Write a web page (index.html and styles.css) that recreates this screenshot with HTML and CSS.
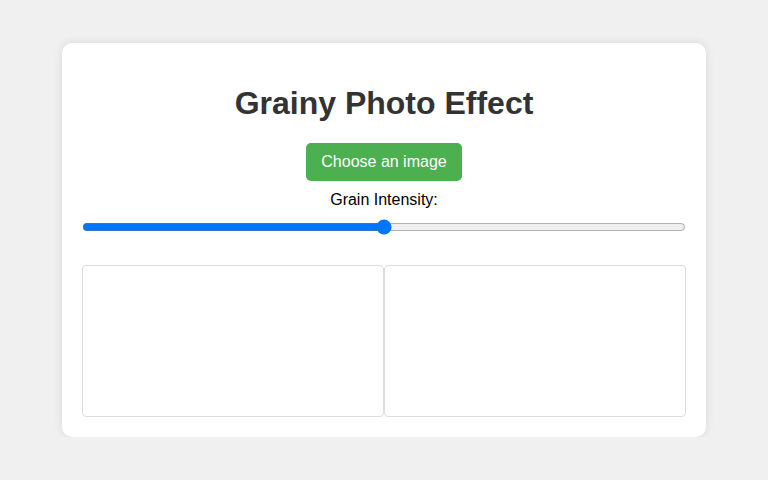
FILE: index.html
```html
<!DOCTYPE html>
<html>
<head>
<meta charset="utf-8">
<link rel="stylesheet" href="styles.css">
</head>
<body>
<div class="card">
  <h1 class="title">Grainy Photo Effect</h1>
  <div class="controls">
    <button class="choose">Choose an image</button>
    <label class="label" for="grain">Grain Intensity:</label>
    <input class="slider" id="grain" type="range" min="0" max="100" value="50">
  </div>
  <div class="panels">
    <div class="panel"></div>
    <div class="panel"></div>
  </div>
</div>
</body>
</html>
```
FILE: styles.css
```css
html, body {
  margin: 0;
  padding: 0;
}
body {
  background: #f0f0f0;
  font-family: "Liberation Sans", Arial, sans-serif;
  color: #000;
  padding-top: 43px;
}
.card {
  width: 604px;
  margin: 0 auto;
  background: #fff;
  border-radius: 10px;
  box-shadow: 0 0 10px rgba(0, 0, 0, 0.1);
  padding: 20px;
}
.title {
  font-size: 32px;
  font-weight: bold;
  color: #333;
  text-align: center;
  margin: 22px 0 21px;
  line-height: 37px;
}
.controls {
  display: flex;
  flex-direction: column;
  align-items: center;
}
.choose {
  background: #4caf50;
  color: #fff;
  border: none;
  border-radius: 5px;
  font-family: "Liberation Sans", Arial, sans-serif;
  font-size: 16px;
  line-height: 18px;
  padding: 10px 15px;
  cursor: pointer;
}
.label {
  font-size: 16px;
  line-height: 18px;
  margin-top: 10px;
}
.slider {
  width: 100%;
  margin: 10px 0 0;
  accent-color: #0075ff;
}
.panels {
  display: flex;
  margin-top: 30px;
}
.panel {
  flex: 1;
  height: 150px;
  border: 1px solid #ddd;
  border-radius: 4px;
}
```
